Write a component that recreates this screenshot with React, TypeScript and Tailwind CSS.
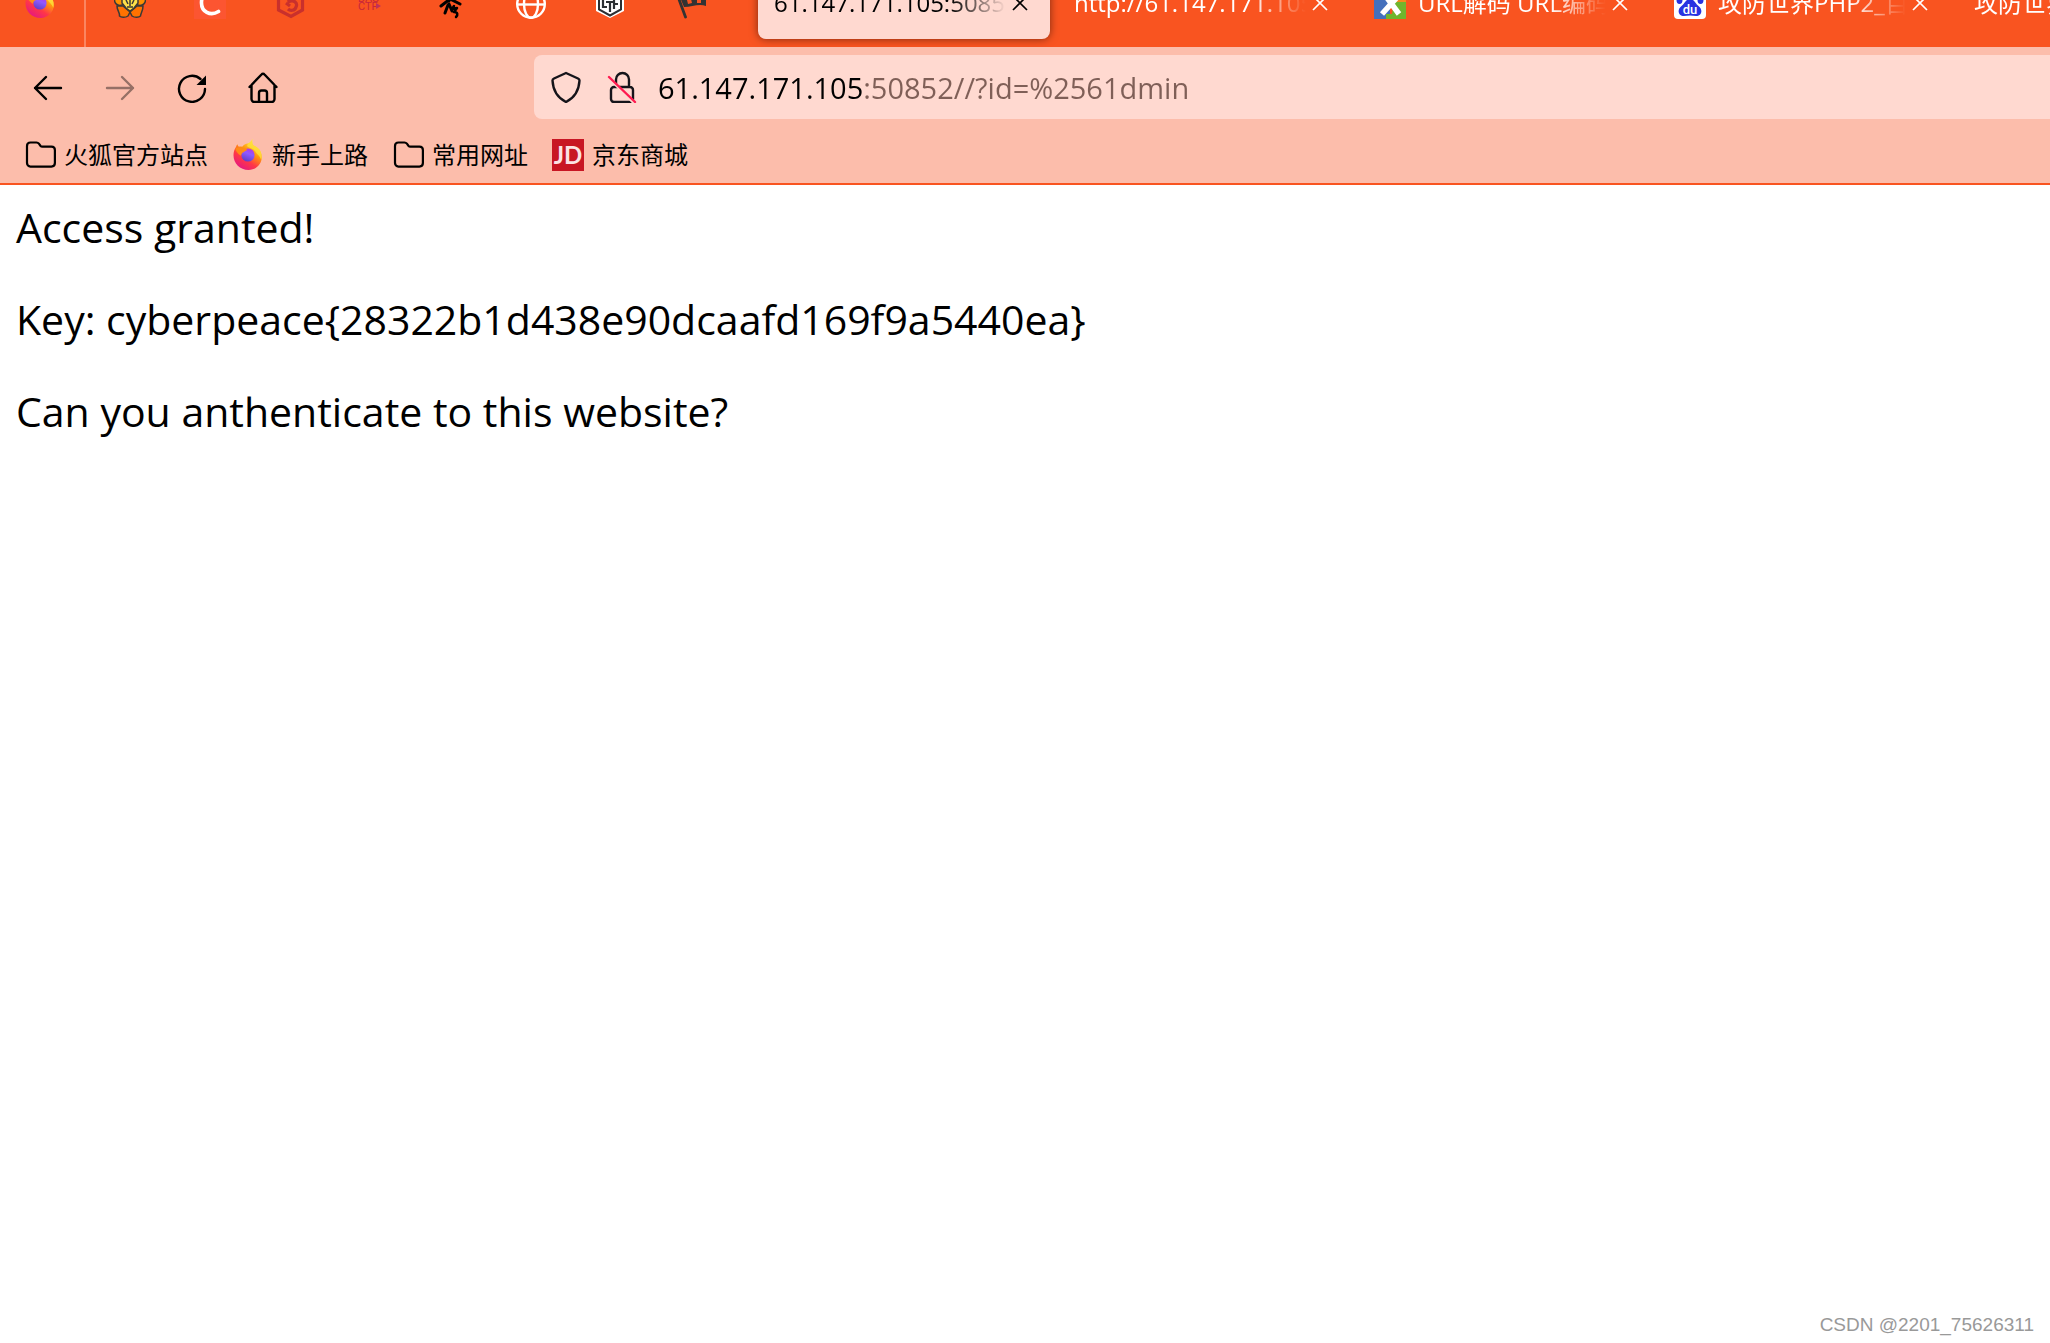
import type { ReactNode } from "react";

interface PinnedTab {
  label: string;
  icon: ReactNode;
}

function FirefoxIcon({ id }: { id: string }) {
  return (
    <svg width="32" height="32" viewBox="0 0 32 32" aria-hidden="true">
      <defs>
        <linearGradient id={`${id}-flame`} x1="0.8" y1="0.1" x2="0.25" y2="1">
          <stop offset="0" stopColor="#fff44f" />
          <stop offset="0.35" stopColor="#ff980e" />
          <stop offset="0.65" stopColor="#ff3647" />
          <stop offset="1" stopColor="#e31587" />
        </linearGradient>
        <linearGradient id={`${id}-globe`} x1="0.7" y1="0" x2="0.3" y2="1">
          <stop offset="0" stopColor="#b833e1" />
          <stop offset="0.4" stopColor="#9059ff" />
          <stop offset="1" stopColor="#5b3fc4" />
        </linearGradient>
      </defs>
      <path
        d="M20.500 0c-.6 2.600-.4 4.500.8 6.200 3.200 1.600 5.800 3.300 7.200 6.200 4 8.600-1.800 18.600-11.900 18.600C8 31 1.500 24.700 1.500 16.300c0-3.300.9-6 2.500-8.300.2-1 .7-2 1.400-2.800.3 1 .8 1.900 1.500 2.500 1.100-.3 2.200-.3 3.300 0 1.400-1.900 3.300-2.900 5.600-3.200 1.500-.3 3.700-2.400 4.700-4.500z"
        fill={`url(#${id}-flame)`}
      />
      <path d="M20.500 0c-.6 2.600-.4 4.500.8 6.200 3.200 1.600 5.800 3.300 7.200 6.200 1.300 2.800 1.500 5.700.8 8.400-1.500-4-4-5-6.300-8.800-2-3-6-3-8-5 .5-1.200 1-2 .8-2.500 1.500-.3 3.700-2.400 4.700-4.500z" fill="#ffe03a" opacity="0.8" />
      <circle cx="16" cy="16" r="6.600" fill={`url(#${id}-globe)`} />
      <path d="M3.500 9c3-1.500 6-.8 7.200.4 1.800-.2 3.600.4 4.600 1.700-1.500.6-2.800 1.300-3.700 2.200-1.800.6-2.600 2-2.600 3.400-3-1.600-5.500-4.700-5.500-7.700z" fill="#ff8a16" />
    </svg>
  );
}

function LionIcon() {
  return (
    <svg width="32" height="32" viewBox="0 0 32 32" stroke="#3c3a36" strokeWidth="1.500" aria-hidden="true">
      <circle cx="16" cy="6" r="6" fill="#f80" />
      <circle cx="6" cy="13" r="5.500" fill="#ff9000" />
      <circle cx="26" cy="13" r="5.500" fill="#ff9000" />
      <path d="M3 19h6l7 6-2 4c-3 2-7 1.500-8.500 0C6 25 3 24 3 19zM29 19h-6l-7 6 2 4c3 2 7 1.500 8.500 0 .500-4 2.500-5 2.500-10z" fill="#ff7200" />
      <path d="M8 9h16v7l-4 5-4 3-4-3-4-5z" fill="#ffe14a" />
      <path d="M12 13l2 4M20 13l-2 4M16 13v6M13 20h6" fill="none" />
    </svg>
  );
}

function LetterCIcon() {
  return (
    <svg width="32" height="32" viewBox="0 0 32 32" aria-hidden="true">
      <rect width="32" height="32" fill="#fc5531" />
      <path d="M24 6c-7-4.500-16-1-16.500 9-.5 10 9 14.500 17 9.500" fill="none" stroke="#fff" strokeWidth="3.600" strokeLinecap="round" />
    </svg>
  );
}

function HexagonIcon() {
  return (
    <svg width="32" height="32" viewBox="0 0 32 32" fill="none" stroke="#c9302c" strokeWidth="3.200" aria-hidden="true">
      <path d="M10 3L4.500 6v17L17 29.500 28.500 23V6L23 3" />
      <path d="M12 8h9l-7 7c6-3 10 1 8 5-1 4-6 4-8 2M12 16l4 3" />
    </svg>
  );
}

function CtfTextIcon() {
  return (
    <svg width="32" height="32" viewBox="0 0 32 32" fill="#c8263a" className="font-['Roboto',sans-serif] text-[11px]" aria-hidden="true">
      <text x="4" y="15">DAS</text>
      <text x="4" y="23">CTF</text>
      <path d="M22 16l5 3-5 3z" fill="#c0305a" />
    </svg>
  );
}

function BrushIcon() {
  return (
    <svg width="32" height="32" viewBox="0 0 32 32" fill="none" stroke="#000" strokeLinecap="round" strokeLinejoin="round" aria-hidden="true">
      <path d="M15 2v12M7 8l16-3" strokeWidth="3" />
      <path d="M7 19l9-7 10 5" strokeWidth="3" />
      <path d="M14 18l-3 8M15 17l3 7" strokeWidth="3" />
      <path d="M20 19l-2 3 5-1-3 4c4 0 4 3 2 5" strokeWidth="2.500" />
    </svg>
  );
}

function GlobeIcon() {
  return (
    <svg width="32" height="32" viewBox="0 0 32 32" fill="none" stroke="#fff" strokeWidth="2.400" aria-hidden="true">
      <circle cx="17" cy="17" r="13.800" />
      <ellipse cx="17" cy="17" rx="7" ry="13.800" />
      <path d="M3 17.500h28" />
    </svg>
  );
}

function ShieldCtfIcon() {
  return (
    <svg width="32" height="32" viewBox="0 0 32 32" aria-hidden="true">
      <path d="M2 4h28v20l-14 7-14-7z" fill="#fff" />
      <path d="M5 5v17.500l11 6 11-6V5" fill="none" stroke="#2b2f33" strokeWidth="2" />
      <path d="M13 11H9v9h4M12 15h7M16 15v10M24 11h-4v11M20 17h4" fill="none" stroke="#2b2f33" strokeWidth="2.200" />
    </svg>
  );
}

function FlagIcon() {
  return (
    <svg width="32" height="32" viewBox="0 0 32 32" aria-hidden="true">
      <path d="M3 7l8.500 23" stroke="#333" strokeWidth="2.800" strokeLinecap="round" />
      <path d="M5 8c7-4 17 2 27-4v15c-7-3-14 1-22 1z" fill="#333" />
      <path d="M13 13l4-1 1 4-4 1zM23 11h4v5h-4z" fill="#f95420" />
    </svg>
  );
}

function PuzzleIcon() {
  return (
    <svg width="32" height="32" viewBox="0 0 32 32" aria-hidden="true">
      <path d="M0 0h16v32H0z" fill="#4470bd" />
      <path d="M16 0h16v16H16z" fill="#f28a1e" />
      <path d="M20 15h12v17H12v-5h6z" fill="#70b52d" />
      <path d="M8 4l17 23M26 7L8 27" stroke="#fff" strokeWidth="5.500" />
    </svg>
  );
}

function BaiduIcon() {
  return (
    <svg width="32" height="32" viewBox="0 0 32 32" aria-hidden="true">
      <rect width="32" height="32" rx="4" fill="#fff" />
      <g fill="#2932e1">
        <ellipse cx="11" cy="7" rx="3.500" ry="4.500" />
        <ellipse cx="21" cy="7" rx="3.500" ry="4.500" />
        <ellipse cx="5.500" cy="13" rx="3" ry="4" />
        <ellipse cx="26.500" cy="13" rx="3" ry="4" />
        <path d="M16 12c4 0 5 4 8.500 7 5 4 3 10-2.500 10-2 0-4-.5-6-.5s-4 .5-6 .5c-5.500 0-7.500-6-2.500-10 3.500-3 4.500-7 8.500-7z" />
      </g>
      <text x="16" y="27" textAnchor="middle" fill="#fff" className="font-['Roboto',sans-serif] text-[13px] font-medium">
        du
      </text>
    </svg>
  );
}

function FolderIcon() {
  return (
    <svg width="32" height="32" viewBox="0 0 32 32" fill="none" stroke="#000" strokeWidth="2.200" aria-hidden="true">
      <path d="M6.500 3.500h6c1 0 1.800.4 2.400 1.200l1.500 2c.5.6 1.200.9 2 .9h9c2 0 3.500 1.500 3.500 3.500v13c0 2-1.500 3.500-3.500 3.500h-21C4.500 27.600 3 26.100 3 24.100V7c0-2 1.500-3.500 3.500-3.500z" />
    </svg>
  );
}

function JdIcon() {
  return (
    <span className="flex h-8 w-8 items-center justify-center bg-[#c81623] font-['Lato',sans-serif] text-2xl font-bold text-[#fbe3e4]" aria-hidden="true">
      JD
    </span>
  );
}

function CloseIcon() {
  return (
    <svg width="16" height="16" viewBox="0 0 16 16" fill="none" stroke="currentColor" strokeWidth="1.700" aria-hidden="true">
      <path d="M1 1l14 14M15 1L1 15" />
    </svg>
  );
}

const pinnedTabs: PinnedTab[] = [
  { label: "Lion", icon: <LionIcon /> },
  { label: "CSDN", icon: <LetterCIcon /> },
  { label: "Hexagon", icon: <HexagonIcon /> },
  { label: "CTF", icon: <CtfTextIcon /> },
  { label: "Brush", icon: <BrushIcon /> },
  { label: "Globe", icon: <GlobeIcon /> },
  { label: "CTF shield", icon: <ShieldCtfIcon /> },
  { label: "Flag", icon: <FlagIcon /> },
];

const tabs = [
  { title: "61.147.171.105:50852/", icon: null, active: true },
  { title: "http://61.147.171.105", icon: null, active: false },
  { title: "URL解码 URL编码", icon: <PuzzleIcon />, active: false },
  { title: "攻防世界PHP2_百度", icon: <BaiduIcon />, active: false },
  { title: "攻防世界", icon: null, active: false },
];

const bookmarks = [
  { label: "火狐官方站点", icon: <FolderIcon /> },
  { label: "新手上路", icon: <FirefoxIcon id="bookmark" /> },
  { label: "常用网址", icon: <FolderIcon /> },
  { label: "京东商城", icon: <JdIcon /> },
];

function TabStrip() {
  return (
    <div className="flex h-[47px] items-end overflow-hidden bg-[#f95420]">
      <div className="flex h-full w-[86px] shrink-0 items-end border-r-2 border-[#fb8560] pb-7 pl-6">
        <button aria-label="Firefox View">
          <FirefoxIcon id="view" />
        </button>
      </div>
      <div className="flex shrink-0 pl-1">
        {pinnedTabs.map((tab) => (
          <button key={tab.label} aria-label={tab.label} className="flex w-20 justify-center pb-7">
            {tab.icon}
          </button>
        ))}
      </div>
      <div className="ml-7 flex shrink-0 gap-2 pb-2">
        {tabs.map((tab) => (
          <div
            key={tab.title}
            className={`flex h-[72px] w-[292px] shrink-0 items-center px-4 ${
              tab.active ? "rounded-lg bg-[#ffd9d0] text-black shadow-[0_0_8px_rgba(0,0,0,0.5)]" : "text-white"
            }`}
          >
            {tab.icon && <span className="mr-3 shrink-0">{tab.icon}</span>}
            <button className="min-w-0 flex-1 overflow-hidden text-left text-2xl whitespace-nowrap [mask-image:linear-gradient(to_left,transparent,black_56px)]">
              {tab.title}
            </button>
            <button aria-label={`Close ${tab.title}`} className="flex w-7 shrink-0 justify-center">
              <CloseIcon />
            </button>
          </div>
        ))}
      </div>
    </div>
  );
}

function NavBar() {
  return (
    <div className="flex h-20 items-center pl-8">
      <div className="flex items-center gap-10">
        <button aria-label="Back">
          <svg width="32" height="32" viewBox="0 0 32 32" fill="none" stroke="#000" strokeWidth="2.400" strokeLinecap="round" strokeLinejoin="round">
            <path d="M29 17H3M14 6L3 17l11 11" />
          </svg>
        </button>
        <button aria-label="Forward" disabled className="opacity-40">
          <svg width="32" height="32" viewBox="0 0 32 32" fill="none" stroke="#000" strokeWidth="2.400" strokeLinecap="round" strokeLinejoin="round">
            <path d="M3 17h26M18 6l11 11-11 11" />
          </svg>
        </button>
        <button aria-label="Reload">
          <svg width="32" height="32" viewBox="0 0 32 32" fill="none" stroke="#000" strokeWidth="2.400" strokeLinecap="round">
            <path d="M29 18a13 13 0 11-4.500-10" />
            <path d="M30 4.500V14h-9.500z" fill="#000" stroke="none" />
          </svg>
        </button>
        <button aria-label="Home">
          <svg width="32" height="32" viewBox="0 0 32 32" fill="none" stroke="#000" strokeWidth="2.400" strokeLinecap="round" strokeLinejoin="round">
            <path d="M1.500 16L13.500 3.500a2 2 0 013 0L28.500 16M3.500 14v14a3 3 0 003 3h17a3 3 0 003-3V14M11 31v-9a2.500 2.500 0 012.500-2.500h3A2.500 2.500 0 0119 22v9" />
          </svg>
        </button>
      </div>
      <div className="ml-[254px] flex h-16 flex-1 items-center rounded-l-lg bg-[#ffd9d0] pl-4">
        <button aria-label="Tracking protection">
          <svg width="32" height="32" viewBox="0 0 32 32" fill="none" stroke="#15141a" strokeWidth="2.400" strokeLinejoin="round">
            <path d="M16 2l12 5.500c1 .5 1.500 1 1.500 2C29 19 24 27 16 31 8 27 3 19 2.500 9.500c0-1 .5-1.500 1.500-2z" />
          </svg>
        </button>
        <button aria-label="Connection not secure" className="ml-6">
          <svg width="32" height="32" viewBox="0 0 32 32" fill="none" stroke="#15141a" strokeWidth="2.400">
            <path d="M10 16V8.500a6.500 6.500 0 0113 0V16M8 16h16a3 3 0 013 3v9a3 3 0 01-3 3H8a3 3 0 01-3-3v-9a3 3 0 013-3z" />
            <path d="M4 8l25 25" stroke="#ffd9d0" strokeWidth="3" />
            <path d="M3 6l26 25" stroke="#ff1a50" strokeLinecap="round" />
          </svg>
        </button>
        <input
          type="text"
          aria-label="Address"
          defaultValue="61.147.171.105:50852//?id=%2561dmin"
          className="ml-5 h-12 min-w-0 flex-1 bg-[linear-gradient(to_right,#000_206px,#7f5f57_206px)] bg-clip-text text-[29px] text-transparent caret-black outline-none"
        />
      </div>
    </div>
  );
}

function BookmarksBar() {
  return (
    <nav className="flex h-14 items-center gap-6 pl-6" aria-label="Bookmarks">
      {bookmarks.map((bookmark) => (
        <a key={bookmark.label} href="#" className="flex items-center gap-2 text-2xl text-black">
          {bookmark.icon}
          {bookmark.label}
        </a>
      ))}
    </nav>
  );
}

export default function App() {
  return (
    <div className="flex min-h-screen flex-col bg-white font-['Open_Sans','Noto_Sans_CJK_SC',sans-serif]">
      <header className="border-b-2 border-[#f95420] bg-[#fcbdab]">
        <TabStrip />
        <NavBar />
        <BookmarksBar />
      </header>
      <main className="flex-1 space-y-9 px-4 pt-[14px] text-[41px] leading-[56px] text-black">
        <p>Access granted!</p>
        <p>Key: cyberpeace&#123;28322b1d438e90dcaafd169f9a5440ea&#125;</p>
        <p>Can you anthenticate to this website?</p>
      </main>
      <footer className="px-4 pb-1 text-right font-['Liberation_Sans',sans-serif] text-[19px] leading-7 text-[#999]">CSDN @2201_75626311</footer>
    </div>
  );
}
